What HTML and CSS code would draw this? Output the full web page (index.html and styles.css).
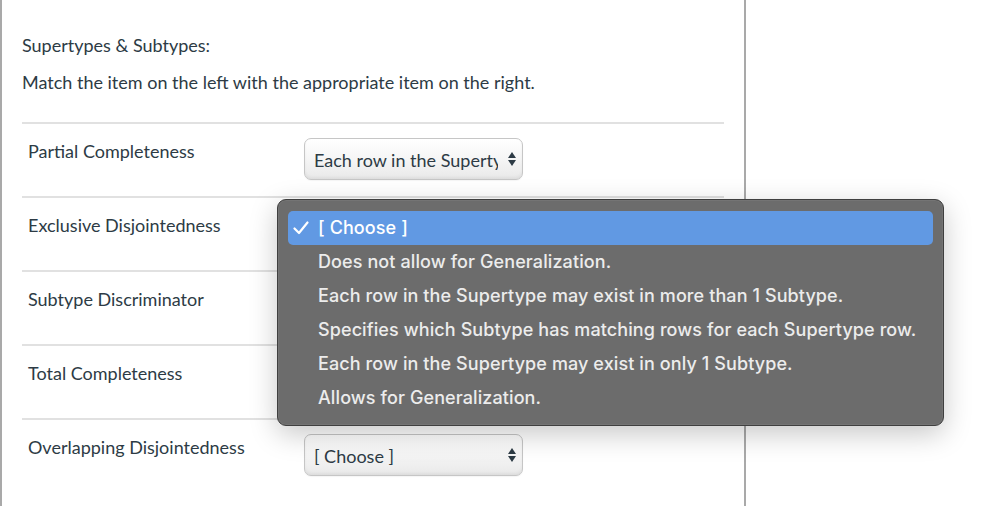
FILE: index.html
```html
<!DOCTYPE html>
<html>
<head>
<meta charset="utf-8">
<link rel="stylesheet" href="styles.css">
</head>
<body>
<div class="page">
  <div class="main">
    <p class="title">Supertypes &amp; Subtypes:</p>
    <p class="prompt">Match the item on the left with the appropriate item on the right.</p>
    <div class="rows">
      <div class="row">
        <div class="label">Partial Completeness</div>
        <div class="select"><span class="sel-text">Each row in the Supertype may exist in only 1 Subtype.</span><span class="arrows"><span class="up"></span><span class="down"></span></span></div>
      </div>
      <div class="row">
        <div class="label">Exclusive Disjointedness</div>
        <div class="select"><span class="sel-text">[ Choose ]</span><span class="arrows"><span class="up"></span><span class="down"></span></span></div>
      </div>
      <div class="row">
        <div class="label">Subtype Discriminator</div>
        <div class="select"><span class="sel-text">[ Choose ]</span><span class="arrows"><span class="up"></span><span class="down"></span></span></div>
      </div>
      <div class="row">
        <div class="label">Total Completeness</div>
        <div class="select"><span class="sel-text">[ Choose ]</span><span class="arrows"><span class="up"></span><span class="down"></span></span></div>
      </div>
      <div class="row">
        <div class="label">Overlapping Disjointedness</div>
        <div class="select"><span class="sel-text">[ Choose ]</span><span class="arrows"><span class="up"></span><span class="down"></span></span></div>
      </div>
    </div>
  </div>
  <div class="side"></div>
</div>
<div class="popup">
  <div class="item selected"><svg class="check" width="16" height="14" viewBox="0 0 16 14"><polyline points="1.5,7.5 6,12 14.5,1.5" fill="none" stroke="#ffffff" stroke-width="2.2" stroke-linecap="round" stroke-linejoin="round"/></svg>[ Choose ]</div>
  <div class="item">Does not allow for Generalization.</div>
  <div class="item">Each row in the Supertype may exist in more than 1 Subtype.</div>
  <div class="item">Specifies which Subtype has matching rows for each Supertype row.</div>
  <div class="item">Each row in the Supertype may exist in only 1 Subtype.</div>
  <div class="item">Allows for Generalization.</div>
</div>
</body>
</html>
```
FILE: styles.css
```css
html, body {
  margin: 0;
  padding: 0;
  background: #ffffff;
  height: 506px;
  overflow: hidden;
}
body {
  font-family: Lato, "Liberation Sans", sans-serif;
  color: #2d3b45;
  font-size: 18px;
}
.page {
  display: flex;
  height: 506px;
}
.main {
  width: 722px;
  padding: 33px 0 0 20px;
  border-left: 2px solid #a9a9a9;
  border-right: 2px solid #a9a9a9;
  box-sizing: content-box;
}
.side {
  flex: 1;
}
.title {
  margin: 0 0 13px 0;
  line-height: 24px;
}
.prompt {
  margin: 0;
  line-height: 24px;
}
.rows {
  margin-top: 28px;
  width: 702px;
}
.row {
  height: 72px;
  border-top: 2px solid #e1e1e1;
  display: flex;
  align-items: flex-start;
}
.label {
  width: 276px;
  padding: 15px 0 0 6px;
  line-height: 24px;
}
.select {
  margin-top: 14px;
  width: 208px;
  height: 40px;
  border: 1px solid #c6c6c6;
  border-radius: 7px;
  background: linear-gradient(#ffffff 0%, #f4f4f4 55%, #e9e9e9 100%);
  box-shadow: inset 0 -2px 3px rgba(0,0,0,0.05), 0 1px 1px rgba(0,0,0,0.04);
  display: flex;
  align-items: center;
  padding: 0 0 0 9px;
  box-sizing: content-box;
  position: relative;
}
.sel-text {
  width: 184px;
  overflow: hidden;
  white-space: nowrap;
  text-overflow: clip;
  line-height: 22px;
  margin-top: 1px;
}
.arrows {
  display: flex;
  flex-direction: column;
  align-items: center;
  gap: 2px;
  margin-left: 10px;
}
.up, .down {
  width: 0;
  height: 0;
  border-left: 4px solid transparent;
  border-right: 4px solid transparent;
}
.up {
  border-bottom: 6px solid #2d3b45;
}
.down {
  border-top: 6px solid #2d3b45;
}
.popup {
  position: absolute;
  left: 277px;
  top: 199px;
  width: 645px;
  padding: 11px 10px 10px 10px;
  background: #6c6c6c;
  border: 1px solid #3f3f3f;
  border-radius: 9px;
  box-shadow: 0 8px 28px rgba(0,0,0,0.22), inset 0 0 0 1px rgba(255,255,255,0.06);
  font-family: Inter, "Noto Sans", sans-serif;
  font-size: 18px;
  letter-spacing: 0.1px;
}
.item {
  height: 34px;
  line-height: 34px;
  padding-left: 30px;
  color: #ececec;
  border-radius: 5px;
  position: relative;
  white-space: nowrap;
  font-weight: 500;
}
.item.selected {
  background: #6199e3;
  color: #ffffff;
}
.check {
  position: absolute;
  left: 5px;
  top: 10px;
}
```
